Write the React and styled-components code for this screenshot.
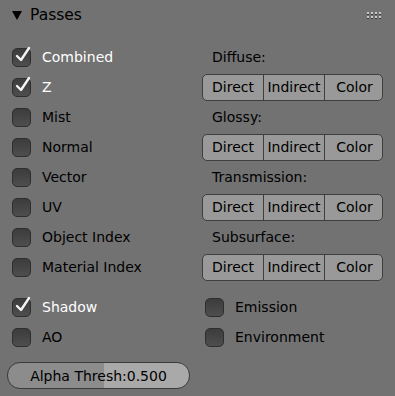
import React from 'react'
import styled, { createGlobalStyle } from 'styled-components'

const Global = createGlobalStyle`
  html, body {
    margin: 0;
    padding: 0;
    background: #727272;
  }
  body {
    font-family: "DejaVu Sans", "Liberation Sans", sans-serif;
    font-size: 14px;
    color: #000;
  }
`

// panel
const Panel = styled.div`
  width: 395px;
  height: 396px;
  background: #727272;
  box-sizing: border-box;
  overflow: hidden;
`

// header
const Header = styled.div`
  height: 30px;
  display: flex;
  align-items: center;
  padding: 0 14px 0 12px;
  gap: 8px;
`

const Title = styled.span`
  font-size: 15.5px;
  color: #000;
  flex: 1;
`

// top section: checkboxes + passes buttons
const Columns = styled.div`
  display: grid;
  grid-template-columns: 202px 181px;
  margin-top: 12px;
`

const LeftCol = styled.div`
  display: flex;
  flex-direction: column;
  padding-left: 12px;
`

const RightCol = styled.div`
  display: flex;
  flex-direction: column;
`

const Row = styled.div`
  height: 30px;
  display: flex;
  align-items: center;
  gap: 11px;
`

const Label = styled.span`
  color: ${({ on }) => (on ? '#fff' : '#000')};
  white-space: nowrap;
`

const GroupLabel = styled.div`
  height: 30px;
  display: flex;
  align-items: center;
  padding-left: 10px;
`

const ButtonRow = styled.div`
  height: 30px;
  display: flex;
  align-items: center;
`

const Segmented = styled.div`
  display: grid;
  grid-template-columns: 60px 61px 60px;
  width: 181px;
  height: 27px;
  box-sizing: border-box;
  border: 1px solid #3e3e3e;
  border-radius: 5px;
  background: #999999;
  overflow: hidden;
`

const Segment = styled.div`
  display: flex;
  align-items: center;
  justify-content: center;
  border-left: ${({ first }) => (first ? 'none' : '1px solid #3e3e3e')};
  white-space: nowrap;
`

// bottom section
const Bottom = styled.div`
  display: grid;
  grid-template-columns: 193px 190px;
  padding-left: 12px;
  margin-top: 10px;
`

const BoxWrap = styled.div`
  position: relative;
  width: 19px;
  height: 19px;
  flex: none;
`

const Box = styled.div`
  width: 19px;
  height: 19px;
  box-sizing: border-box;
  border: 1px solid #2e2e2e;
  border-radius: 5px;
  background: linear-gradient(#3c3c3c, #4e4e4e);
`

const Tick = styled.svg`
  position: absolute;
  left: 2px;
  top: -3px;
`

const Slider = styled.div`
  margin: 10px 0 0 7px;
  width: 183px;
  height: 27px;
  box-sizing: border-box;
  border: 1px solid #3a3a3a;
  border-radius: 13px;
  background: linear-gradient(90deg, #8c8c8c 0%, #8c8c8c 53%, #a9a9a9 53%, #a9a9a9 100%);
  display: flex;
  align-items: center;
  justify-content: center;
`

const Check = ({ on }) => (
  <BoxWrap>
    <Box />
    {on && (
      <Tick width="18" height="18" viewBox="0 0 18 18">
        <path d="M3 11 L7 15 L15 3" fill="none" stroke="#f4f4f4" strokeWidth="2.4" strokeLinecap="round" strokeLinejoin="round" />
      </Tick>
    )}
  </BoxWrap>
)

const Toggle = ({ label, on }) => (
  <Row>
    <Check on={on} />
    <Label on={on}>{label}</Label>
  </Row>
)

const Buttons = () => (
  <ButtonRow>
    <Segmented>
      <Segment first>Direct</Segment>
      <Segment>Indirect</Segment>
      <Segment>Color</Segment>
    </Segmented>
  </ButtonRow>
)

const Grip = () => (
  <svg width="14" height="7" viewBox="0 0 14 7">
    {[0, 4, 8, 12].map(x => (
      <g key={x}>
        <rect x={x} y="0" width="2" height="2" fill="#c8c8c8" />
        <rect x={x} y="2" width="2" height="1" fill="#3c3c3c" />
        <rect x={x} y="4" width="2" height="2" fill="#c8c8c8" />
        <rect x={x} y="6" width="2" height="1" fill="#3c3c3c" />
      </g>
    ))}
  </svg>
)

const passes = [
  ['Combined', true],
  ['Z', true],
  ['Mist', false],
  ['Normal', false],
  ['Vector', false],
  ['UV', false],
  ['Object Index', false],
  ['Material Index', false],
]

const groups = ['Diffuse:', 'Glossy:', 'Transmission:', 'Subsurface:']

export default function App() {
  return (
    <Panel>
      <Global />
      <Header>
        <svg width="10" height="10" viewBox="0 0 10 10">
          <path d="M0 1 L10 1 L5 10 Z" fill="#000" />
        </svg>
        <Title>Passes</Title>
        <Grip />
      </Header>
      <Columns>
        <LeftCol>
          {passes.map(([label, on]) => (
            <Toggle key={label} label={label} on={on} />
          ))}
        </LeftCol>
        <RightCol>
          {groups.map(g => (
            <React.Fragment key={g}>
              <GroupLabel>{g}</GroupLabel>
              <Buttons />
            </React.Fragment>
          ))}
        </RightCol>
      </Columns>
      <Bottom>
        <Toggle label="Shadow" on />
        <Toggle label="Emission" />
        <Toggle label="AO" />
        <Toggle label="Environment" />
      </Bottom>
      <Slider>Alpha Thresh:0.500</Slider>
    </Panel>
  )
}
